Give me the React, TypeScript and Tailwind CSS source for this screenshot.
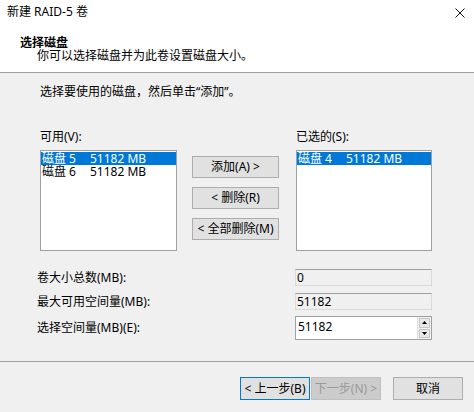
import React from 'react';

const FONT = { fontFamily: '"Noto Sans", "Noto Sans CJK SC", sans-serif' };

interface DiskRow {
  name: string;
  size: string;
  selected?: boolean;
}

const AVAILABLE: DiskRow[] = [
  { name: '磁盘 5', size: '51182 MB', selected: true },
  { name: '磁盘 6', size: '51182 MB' },
];

const SELECTED: DiskRow[] = [{ name: '磁盘 4', size: '51182 MB', selected: true }];

function DiskList({ rows, width }: { rows: DiskRow[]; width: string }) {
  return (
    <div className={`${width} h-[101px] bg-white border border-[#a0a0a0] pt-[1px]`}>
      {rows.map((r, i) => (
        <div
          key={i}
          className={`flex h-[13px] items-center text-[12px] leading-[13px] ${
            r.selected ? 'bg-[#0078d7] text-white' : 'text-black'
          }`}
        >
          <span className="w-[49px] pl-[1px]">{r.name}</span>
          <span>{r.size}</span>
        </div>
      ))}
    </div>
  );
}

function MidButton({ label }: { label: string }) {
  return (
    <div className="w-[87px] h-[22px] flex items-center justify-center bg-[#e1e1e1] border border-[#adadad] text-[12px] text-black">
      {label}
    </div>
  );
}

function FooterButton({ label, variant }: { label: string; variant: 'focus' | 'disabled' | 'normal' }) {
  const cls =
    variant === 'focus'
      ? 'bg-[#e1e1e1] border-[#0078d7] text-black'
      : variant === 'disabled'
      ? 'bg-[#cccccc] border-[#bfbfbf] text-[#9a9a9a]'
      : 'bg-[#e1e1e1] border-[#adadad] text-black';
  return (
    <div className={`w-[70px] h-[23px] flex items-center justify-center border text-[12px] ${cls}`}>
      {label}
    </div>
  );
}

export default function App() {
  return (
    <div className="w-[474px] h-[412px] flex flex-col bg-[#f0f0f0] overflow-hidden" style={FONT}>
      {/* Header */}
      <div className="h-[73px] bg-white border-b border-[#a0a0a0] relative">
        <div className="pl-[7px] pt-[4px] h-[16px] leading-[16px] text-[12px] text-black box-content">新建 RAID-5 卷</div>
        <svg className="absolute right-[9px] top-[8px]" width="10" height="10" viewBox="0 0 10 10">
          <path d="M0.5 0.5 L9.5 9.5 M9.5 0.5 L0.5 9.5" stroke="#111" strokeWidth="1" />
        </svg>
        <div className="pl-[20px] mt-[16px] text-[12px] leading-[13px] font-bold text-black">选择磁盘</div>
        <div className="pl-[37px] text-[12px] leading-[13px] text-black">你可以选择磁盘并为此卷设置磁盘大小。</div>
      </div>

      {/* Body */}
      <div className="flex-1 pl-[40px] pt-[11px] text-[12px] text-black">
        <div className="h-[16px] leading-[16px]">选择要使用的磁盘，然后单击“添加”。</div>

        <div className="flex mt-[29px]">
          <div className="flex flex-col">
            <div className="h-[16px] leading-[16px]">可用(V):</div>
            <div className="mt-[5px]">
              <DiskList rows={AVAILABLE} width="w-[137px]" />
            </div>
          </div>
          <div className="ml-[15px] pt-[27px] flex flex-col gap-[9px]">
            <MidButton label="添加(A) >" />
            <MidButton label="< 删除(R)" />
            <MidButton label="< 全部删除(M)" />
          </div>
          <div className="ml-[17px] flex flex-col">
            <div className="h-[16px] leading-[16px]">已选的(S):</div>
            <div className="mt-[5px]">
              <DiskList rows={SELECTED} width="w-[136px]" />
            </div>
          </div>
        </div>

        <div className="ml-[-3px] mt-[18px] flex flex-col">
          <div className="flex items-center h-[17px]">
            <span className="w-[258px]">卷大小总数(MB):</span>
            <div className="w-[137px] h-[17px] bg-[#f0f0f0] border border-[#dadada] border-t-[#a0a0a0] pl-[1px] leading-[15px]">0</div>
          </div>
          <div className="flex items-center h-[17px] mt-[7px]">
            <span className="w-[258px]">最大可用空间量(MB):</span>
            <div className="w-[137px] h-[17px] bg-[#f0f0f0] border border-[#dadada] border-t-[#a0a0a0] pl-[1px] leading-[15px]">51182</div>
          </div>
          <div className="flex items-center h-[24px] mt-[6px]">
            <span className="w-[258px]">选择空间量(MB)(E):</span>
            <div className="w-[137px] h-[24px] bg-white border border-[#a0a0a0] flex">
              <div className="flex-1 pl-[2px] leading-[20px]">51182</div>
              <div className="w-[14px] flex flex-col p-[1px] gap-[1px] bg-[#f0f0f0] border-l border-[#e0e0e0]">
                <div className="flex-1 flex items-center justify-center bg-[#e8e8e8] border border-[#c8c8c8]">
                  <svg width="5" height="3" viewBox="0 0 5 3"><path d="M2.5 0 L5 3 L0 3 Z" fill="#000" /></svg>
                </div>
                <div className="flex-1 flex items-center justify-center bg-[#e8e8e8] border border-[#c8c8c8]">
                  <svg width="5" height="3" viewBox="0 0 5 3"><path d="M0 0 L5 0 L2.5 3 Z" fill="#000" /></svg>
                </div>
              </div>
            </div>
          </div>
        </div>
      </div>

      {/* Footer */}
      <div className="h-[51px] border-t border-[#a0a0a0] flex justify-end pt-[15px] pr-[11px]">
        <FooterButton label="< 上一步(B)" variant="focus" />
        <div className="ml-[1px]">
          <FooterButton label="下一步(N) >" variant="disabled" />
        </div>
        <div className="ml-[12px]">
          <FooterButton label="取消" variant="normal" />
        </div>
      </div>
    </div>
  );
}
